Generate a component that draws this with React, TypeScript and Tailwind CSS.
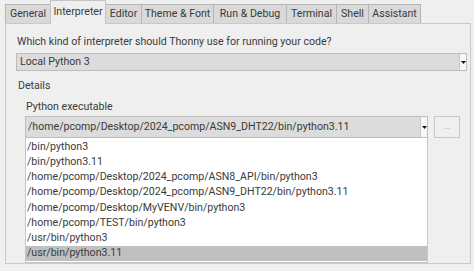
const tabs: [string, number][] = [
  ["General", 46],
  ["Interpreter", 56],
  ["Editor", 37],
  ["Theme & Font", 73],
  ["Run & Debug", 74],
  ["Terminal", 51],
  ["Shell", 33],
  ["Assistant", 53],
];

const paths = [
  "/bin/python3",
  "/bin/python3.11",
  "/home/pcomp/Desktop/2024_pcomp/ASN8_API/bin/python3",
  "/home/pcomp/Desktop/2024_pcomp/ASN9_DHT22/bin/python3.11",
  "/home/pcomp/Desktop/MyVENV/bin/python3",
  "/home/pcomp/TEST/bin/python3",
  "/usr/bin/python3",
  "/usr/bin/python3.11",
];

function Arrow() {
  return (
    <div className="flex items-center justify-center w-[7px] self-stretch bg-[#f7f7f7] border-l border-[#c9c9c9]">
      <svg width="5" height="3" viewBox="0 0 5 3">
        <path d="M0 0h5L2.5 3z" fill="#111" />
      </svg>
    </div>
  );
}

export default function App() {
  return (
    <div className="w-[474px] h-[271px] bg-[#efefef] overflow-hidden text-[10.6px] text-[#3a3a3a]" style={{ fontFamily: "Roboto, 'Liberation Sans', sans-serif" }}>
      <div className="flex items-end h-[23px] pl-[5px]">
        {tabs.map(([t, w]) => (
          t === "Interpreter" ? (
            <div key={t} style={{ width: w }} className="h-[24px] -mb-px -ml-px flex items-center justify-center whitespace-nowrap bg-[#efefef] border border-b-0 border-[#c4c4c4] relative z-10 pb-[2px]">
              {t}
            </div>
          ) : (
            <div key={t} style={{ width: w }} className="h-[19px] flex items-center justify-center whitespace-nowrap bg-[#d9d9d9] border border-b-0 border-[#b5b5b5] -ml-px first:ml-0">
              {t}
            </div>
          )
        ))}
      </div>
      <div className="mx-[5px] w-[466px] h-[241px] border border-[#c9c9c9] pl-[11px] pr-[3px]">
        <div className="mt-[10px] leading-[16px]">Which kind of interpreter should Thonny use for running your code?</div>
        <div className="mt-[3px] -ml-px h-[18px] flex border border-[#bdbdbd] bg-[#dcdcdc]">
          <div className="flex-1 pl-[3px] flex items-center">Local Python 3</div>
          <Arrow />
        </div>
        <div className="mt-[7px] pl-[1px] leading-[16px]">Details</div>
        <div className="pl-[8px]">
          <div className="mt-[5px] pl-[1px] leading-[16px]">Python executable</div>
          <div className="flex mt-[1px] gap-[6px]">
            <div className="w-[403px]">
              <div className="h-[22px] flex border border-[#bdbdbd] bg-[#dcdcdc]">
                <div className="flex-1 pl-[2px] flex items-center">/home/pcomp/Desktop/2024_pcomp/ASN9_DHT22/bin/python3.11</div>
                <Arrow />
              </div>
              <div className="h-[125px] bg-white border border-t-0 border-[#c6c6c6] pt-[1px]">
                {paths.map((p, i) => (
                  <div key={p} className={`h-[15.25px] flex items-center pl-px ${i === paths.length - 1 ? "bg-[#c0c0c0]" : ""}`}>
                    {p}
                  </div>
                ))}
              </div>
            </div>
            <div className="w-[26px] h-[22px] border border-[#c8c8c8] bg-[#efefef] flex items-center justify-center text-[8px] text-[#a0a0a0]">...</div>
          </div>
        </div>
      </div>
    </div>
  );
}
